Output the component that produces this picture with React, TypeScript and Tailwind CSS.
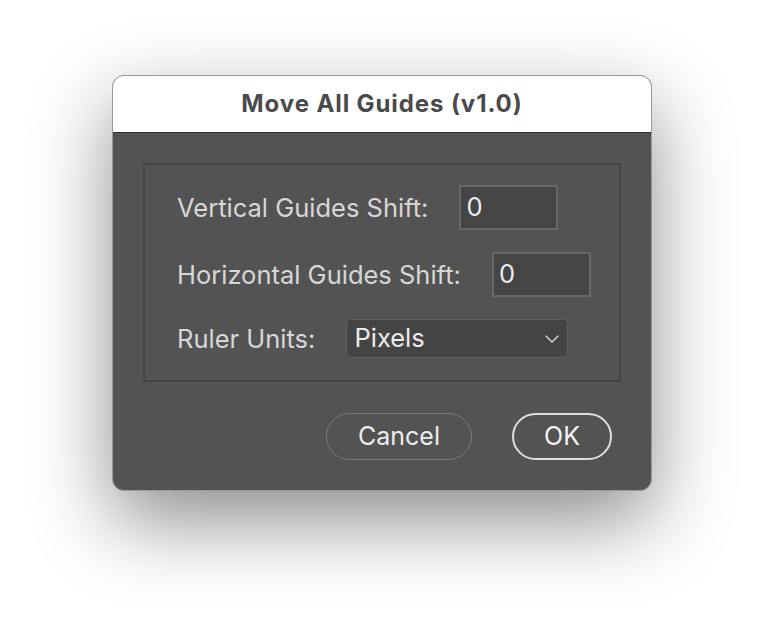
import { ChevronDown } from 'lucide-react';

const Row = ({ label, children }: { label: string; children: React.ReactNode }) => (
  <div className="flex items-center gap-[31px]">
    <span className="text-[25.5px] text-[#d7d7d7] leading-none">{label}</span>
    {children}
  </div>
);

const NumField = ({ value }: { value: string }) => (
  <div className="w-[99px] h-[45px] bg-[#454545] border-2 border-[#686868] flex items-center pl-[5px] text-[25.5px] text-[#ececec]">
    {value}
  </div>
);

const App = () => {
  return (
    <div
      className="w-[764px] h-[640px] bg-white flex justify-center pt-[75px]"
      style={{ fontFamily: 'Inter, "Noto Sans", "Liberation Sans", sans-serif' }}
    >
      <div className="w-[540px] h-[416px] rounded-[12px] overflow-hidden border border-[#9a9a9a] shadow-[0_30px_80px_rgba(0,0,0,0.45)] flex flex-col bg-[#535353]">
        <div className="h-[57px] bg-white border-b border-[#2e2e2e] flex items-center justify-center">
          <span className="text-[24px] font-bold tracking-[0.9px] text-[#4a4a4a]">Move All Guides (v1.0)</span>
        </div>

        <div className="flex-1 flex flex-col px-[30px] pt-[30px]">
          <div className="h-[219px] border-2 border-[#444444] flex flex-col gap-[22px] pl-[32px] pt-[20px]">
            <Row label="Vertical Guides Shift:">
              <NumField value="0" />
            </Row>
            <Row label="Horizontal Guides Shift:">
              <NumField value="0" />
            </Row>
            <Row label="Ruler Units:">
              <div className="w-[222px] h-[39px] bg-[#444444] border border-[#5e5e5e] rounded-[4px] flex items-center justify-between pl-[7px] pr-[3px] text-[25.5px] text-[#ececec]">
                <span>Pixels</span>
                <ChevronDown size={24} strokeWidth={1.5} className="text-[#cfcfcf]" />
              </div>
            </Row>
          </div>

          <div className="flex justify-end gap-[40px] pt-[31px] pr-[9px]">
            <button className="w-[146px] h-[47px] rounded-full border-[1.5px] border-[#7a7a7a] text-[25px] text-[#ececec]">
              Cancel
            </button>
            <button className="w-[100px] h-[47px] rounded-full border-2 border-[#dedede] text-[25px] text-[#f2f2f2]">
              OK
            </button>
          </div>
        </div>
      </div>
    </div>
  );
};

export default App;
